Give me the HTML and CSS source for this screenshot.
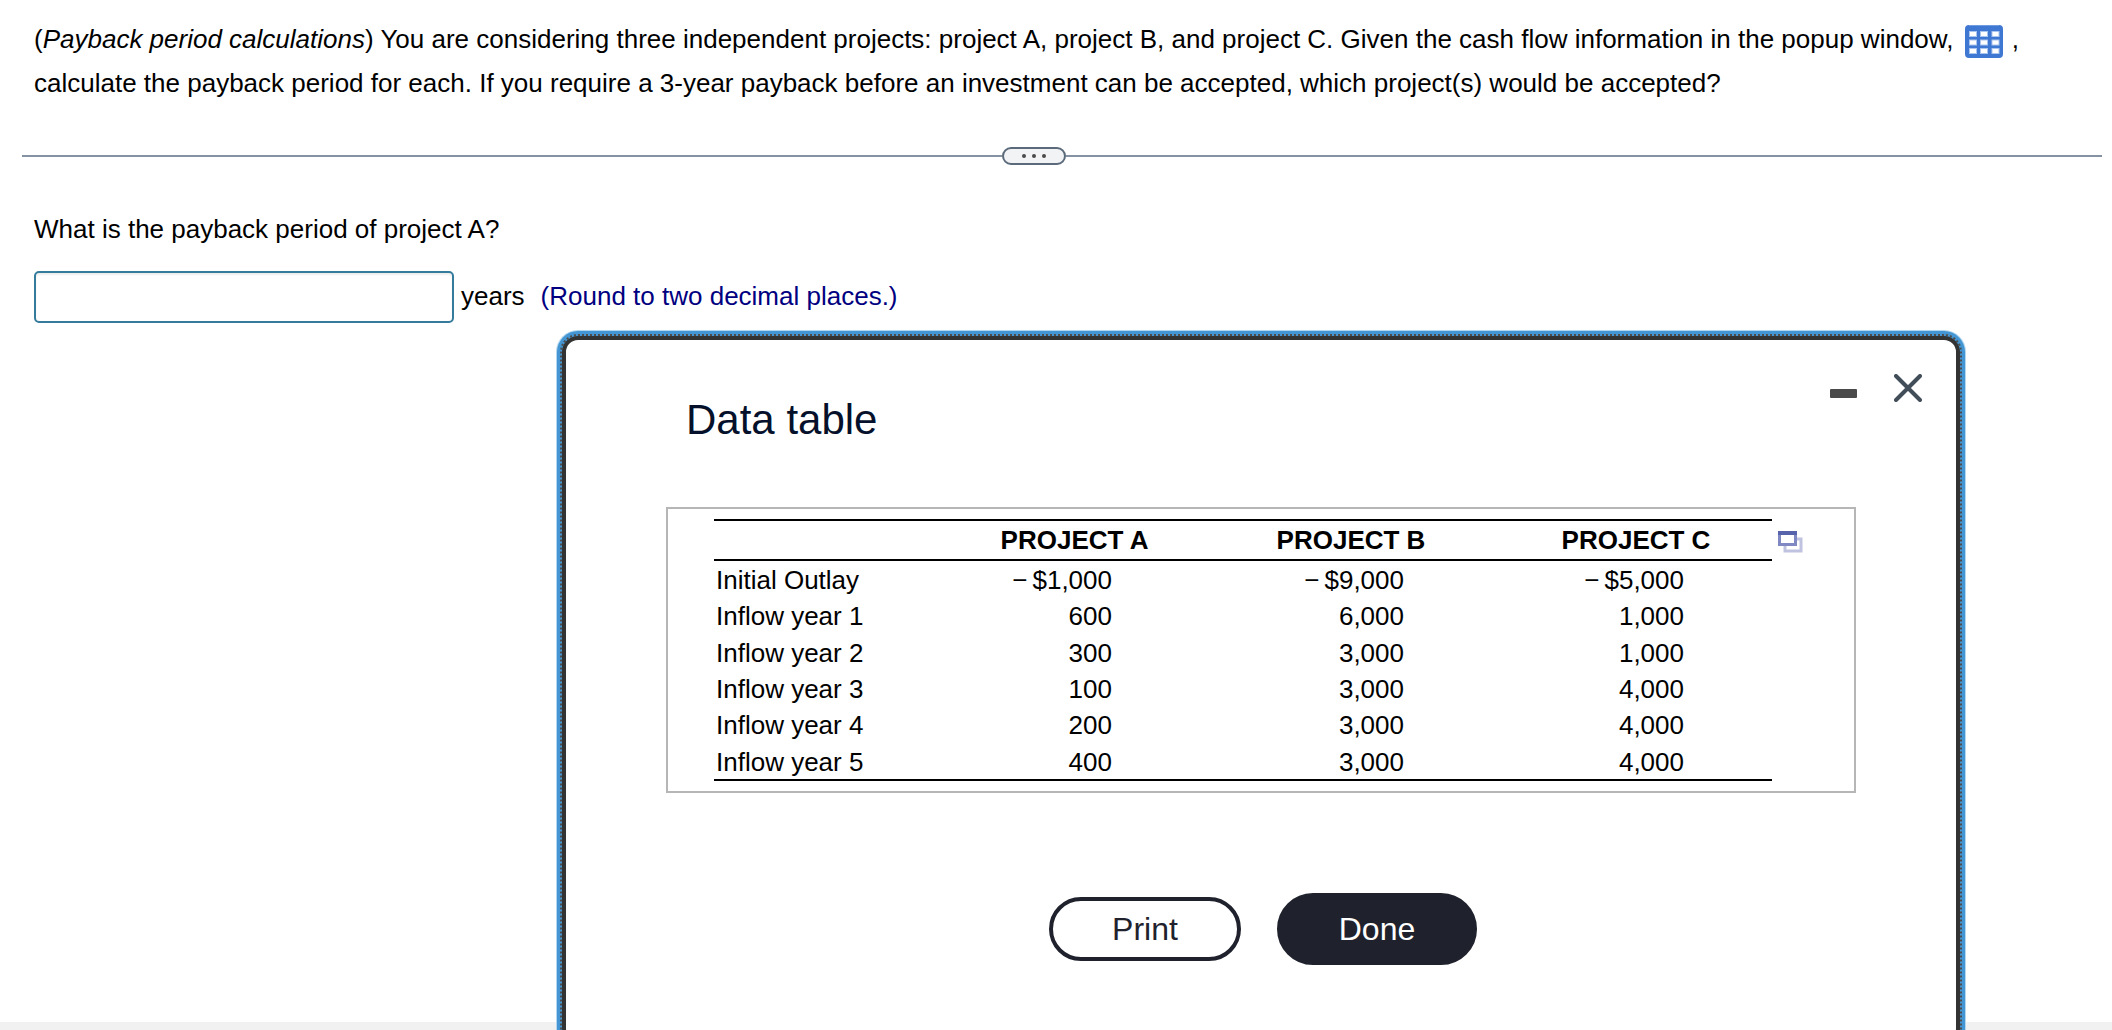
FILE: index.html
```html
<!DOCTYPE html>
<html lang="en">
<head>
  <meta charset="UTF-8" />
  <title>Payback period calculations</title>
  <link rel="stylesheet" href="styles.css">
</head>
<body>
  <main class="exercise">
    <p class="question">(<em>Payback period calculations</em>) You are considering three independent projects: project A, project B, and project C. Given the cash flow information in the popup window,
      <button class="table-button" type="button" aria-label="Open data table">
        <svg width="38" height="34" viewBox="0 0 38 34">
          <rect width="38" height="33" y="1" rx="4" fill="#3f78d2"/>
          <path d="M4 1.5H34" stroke="#6f9be0"/>
          <g fill="#fff" stroke="#a9c4ee" stroke-width="1">
            <rect x="4.5" y="7.5" width="7" height="5"/>
            <rect x="15.5" y="7.5" width="7" height="5"/>
            <rect x="27" y="7.5" width="7" height="5"/>
            <rect x="4.5" y="16" width="7" height="5"/>
            <rect x="15.5" y="16" width="7" height="5"/>
            <rect x="27" y="16" width="7" height="5"/>
            <rect x="4.5" y="24.5" width="7" height="5"/>
            <rect x="15.5" y="24.5" width="7" height="5"/>
            <rect x="27" y="24.5" width="7" height="5"/>
          </g>
        </svg>
      </button>
      ,<br>
      calculate the payback period for each. If you require a 3-year payback before an investment can be accepted, which project(s) would be accepted?</p>

    <div class="divider">
      <span class="divider-line"></span>
      <button class="divider-handle" type="button" aria-label="Resize question">
        <svg width="24" height="4" viewBox="0 0 24 4" fill="#4a4a4a">
          <circle cx="2" cy="2" r="2"/>
          <circle cx="12" cy="2" r="2"/>
          <circle cx="22" cy="2" r="2"/>
        </svg>
      </button>
      <span class="divider-line divider-line-end"></span>
    </div>

    <section class="answer">
      <p class="prompt">What is the payback period of project A?</p>
      <div class="answer-row">
        <input class="answer-input" id="payback" type="text">
        <label for="payback">years</label>
        <span class="hint">(Round to two decimal places.)</span>
      </div>
    </section>
  </main>

  <footer class="footer"></footer>

  <div class="dialog" role="dialog" aria-labelledby="dialog-title">
    <header class="dialog-header">
      <h2 id="dialog-title">Data table</h2>
      <div class="dialog-controls">
        <button type="button" aria-label="Minimize">
          <svg width="28" height="28" viewBox="0 0 28 28"><rect x="0" y="15" width="27" height="9" rx="1" fill="#4a4a4a"/></svg>
        </button>
        <button type="button" aria-label="Close">
          <svg width="28" height="28" viewBox="0 0 28 28"><path d="M2 2L26 26M26 2L2 26" stroke="#414d59" stroke-width="4" stroke-linecap="round"/></svg>
        </button>
      </div>
    </header>

    <div class="table-panel">
      <table class="data-table">
        <colgroup>
          <col class="col-label">
          <col class="col-a">
          <col class="col-b">
          <col class="col-c">
        </colgroup>
        <thead>
          <tr><td></td><th>PROJECT A</th><th>PROJECT B</th><th>PROJECT C</th></tr>
        </thead>
        <tbody>
          <tr><td>Initial Outlay</td><td><span class="minus">−</span>$1,000</td><td><span class="minus">−</span>$9,000</td><td><span class="minus">−</span>$5,000</td></tr>
          <tr><td>Inflow year 1</td><td>600</td><td>6,000</td><td>1,000</td></tr>
          <tr><td>Inflow year 2</td><td>300</td><td>3,000</td><td>1,000</td></tr>
          <tr><td>Inflow year 3</td><td>100</td><td>3,000</td><td>4,000</td></tr>
          <tr><td>Inflow year 4</td><td>200</td><td>3,000</td><td>4,000</td></tr>
          <tr><td>Inflow year 5</td><td>400</td><td>3,000</td><td>4,000</td></tr>
        </tbody>
      </table>
      <button class="popout" type="button" aria-label="Open in spreadsheet">
        <svg width="25" height="22" viewBox="0 0 25 22">
          <rect x="7" y="8" width="16" height="12" fill="#fff" stroke="#bfc3e0" stroke-width="3"/>
          <rect x="1.5" y="1.5" width="16" height="12" fill="#fff" stroke="#7f88c2" stroke-width="3"/>
          <rect x="0" y="0" width="19" height="4" fill="#5763ab"/>
        </svg>
      </button>
    </div>

    <div class="dialog-actions">
      <button class="button" type="button">Print</button>
      <button class="button button-primary" type="button">Done</button>
    </div>
  </div>
</body>
</html>
```
FILE: styles.css
```css
* {
  box-sizing: border-box;
}
body {
  display: flex;
  flex-direction: column;
  height: 100vh;
  margin: 0;
  overflow: hidden;
  background: #fff;
  color: #000;
  font-family: "Liberation Sans", Arial, sans-serif;
  font-size: 26px;
}
button {
  padding: 0;
  border: 0;
  background: none;
  font-family: inherit;
  cursor: pointer;
}
button svg {
  display: block;
}
.exercise {
  flex: 1;
}
.question {
  margin: 0;
  padding: 17px 34px 0;
  line-height: 44px;
}
.table-button {
  margin: 0 2px 0 4px;
  height: 34px;
  vertical-align: middle;
}

/* divider with the drag handle */
.divider {
  display: flex;
  align-items: center;
  margin: 42px 10px 0 22px;
}
.divider-line {
  flex: 35 1 0;
  height: 2px;
  background: #8592a3;
}
.divider-line-end {
  flex-grow: 37;
}
.divider-handle {
  display: flex;
  align-items: center;
  justify-content: center;
  width: 64px;
  height: 18px;
  border: 2px solid #5c6b7b;
  border-radius: 9px;
  background: #f1f3f5;
}

.answer {
  padding: 42px 34px 0;
}
.prompt {
  margin: 0;
  line-height: 44px;
}
.answer-row {
  display: flex;
  align-items: flex-start;
  margin-top: 20px;
  line-height: 50px;
}
.answer-input {
  width: 420px;
  height: 52px;
  margin-right: 7px;
  padding: 0 12px;
  border: 2px solid #357b9b;
  border-radius: 5px;
  box-shadow: inset 0 2px 2px #eee;
  font: inherit;
}
.hint {
  margin-left: 16px;
  color: #000080;
}
.footer {
  height: 8px;
  background: #f1f1f1;
}

/* data table popup */
.dialog {
  position: absolute;
  top: 336px;
  left: 562px;
  width: 1398px;
  padding: 34px 34px 76px 100px;
  border: 4px solid #333;
  border-radius: 16px;
  outline: 2px dotted #4d4d4d;
  background: #fff;
  box-shadow: 0 0 0 5px #4396d3, 0 0 0 6px #b3d7f0;
}
.dialog-header {
  display: flex;
  justify-content: space-between;
  align-items: flex-start;
}
.dialog-header h2 {
  margin: 22px 0 0 20px;
  color: #05112a;
  font-size: 42px;
  font-weight: normal;
  line-height: 48px;
}
.dialog-controls {
  display: flex;
  gap: 36px;
}
.table-panel {
  display: flex;
  align-items: flex-start;
  margin: 63px 66px 0 0;
  padding: 10px 46px;
  border: 2px solid #b6b6b6;
}
.data-table {
  flex: none;
  width: 1058px;
  height: 262px;
  table-layout: fixed;
  border-collapse: collapse;
  border-bottom: 2px solid #000;
}
.data-table thead {
  border-top: 2px solid #000;
  border-bottom: 2px solid #000;
}
.data-table th,
.data-table td {
  padding: 0;
  line-height: 36px;
}
.data-table thead tr {
  height: 40px;
}
.data-table tbody td {
  padding-top: 2px;
  line-height: 34px;
  text-align: right;
}
.data-table tbody td:first-child {
  padding-left: 2px;
  text-align: left;
}
.col-label {
  width: 233px;
}
.col-a {
  width: 255px;
}
.col-b {
  width: 298px;
}
.data-table tbody td:nth-child(2) {
  padding-right: 90px;
}
.data-table tbody td:nth-child(3) {
  padding-right: 96px;
}
.data-table tbody td:nth-child(4) {
  padding-right: 88px;
}
.minus {
  margin-right: 5px;
}
.popout {
  margin: 12px 0 0 6px;
}
.dialog-actions {
  display: flex;
  align-items: center;
  justify-content: center;
  gap: 36px;
  margin: 100px 62px 0 0;
}
.button {
  width: 192px;
  height: 64px;
  border: 4px solid #1f222d;
  border-radius: 36px;
  background: #fff;
  color: #1f222d;
  font-size: 32px;
}
.button-primary {
  width: 200px;
  height: 72px;
  background: #1f222d;
  color: #fff;
}
```
